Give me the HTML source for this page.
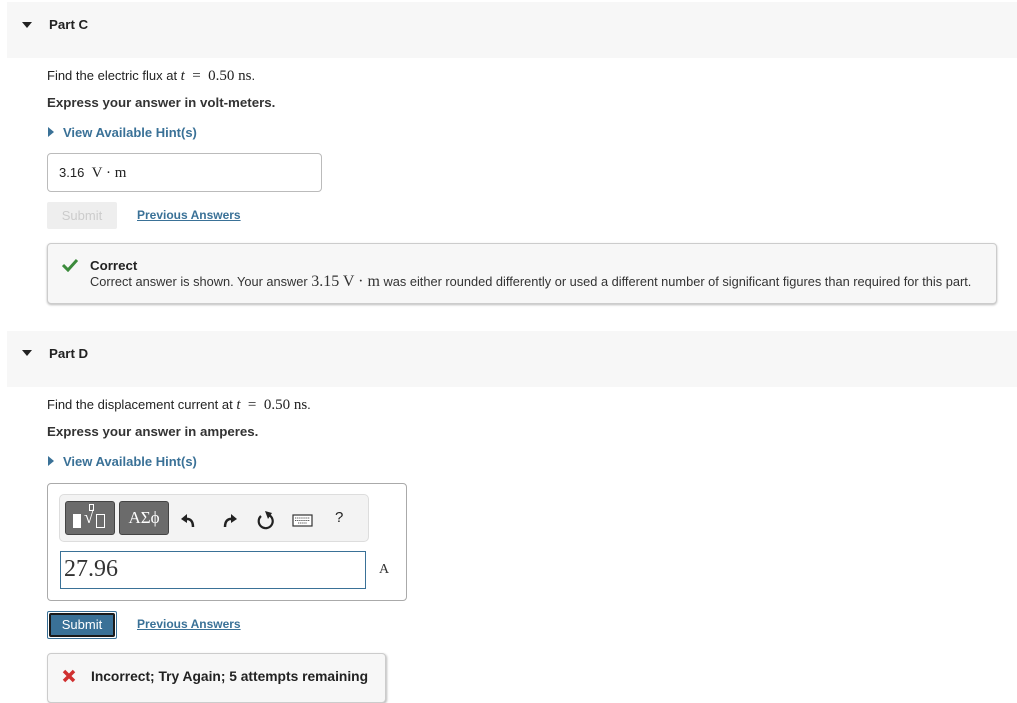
<!DOCTYPE html>
<html><head><style>
*{box-sizing:border-box;margin:0;padding:0}
body{width:1017px;height:698px;overflow:hidden;background:#fff;font-family:"Liberation Sans",Arial,sans-serif;color:#333;position:relative}
.a{position:absolute}
.band{position:absolute;left:7px;width:1010px;height:56px;background:#f7f7f7}
.tri{position:absolute;left:22px;width:0;height:0;border-left:5px solid transparent;border-right:5px solid transparent;border-top:6px solid #222}
.t{font-size:13px;color:#222}
.b{font-size:13.3px;font-weight:bold;color:#333}
.m{font-family:"Liberation Serif",serif;font-size:15px}
.hint{font-size:13px;font-weight:bold;color:#3a7197}
.ht{position:absolute;left:48px;width:0;height:0;border-top:5px solid transparent;border-bottom:5px solid transparent;border-left:6px solid #3a7197}
.link{font-size:12px;font-weight:bold;color:#3a7197;text-decoration:underline}
.btn{position:absolute;background:#6b6b6b;border:1px solid #444;border-radius:3px;color:#fff}
</style></head><body>
<div class="band" style="top:2px"></div>
<div class="tri" style="top:22px"></div>
<div class="a b" style="left:49px;top:17px;color:#222">Part C</div>
<div class="a t" style="left:47px;top:68px">Find the electric flux at <span class="m" style="font-style:italic">t</span> <span class="m">&nbsp;=&nbsp; 0.50 ns</span>.</div>
<div class="a b" style="left:47px;top:95px">Express your answer in volt-meters.</div>
<div class="ht" style="top:127px"></div>
<div class="a hint" style="left:63px;top:125px">View Available Hint(s)</div>
<div class="a" style="left:47px;top:153px;width:275px;height:39px;border:1px solid #bbb;border-radius:4px"></div>
<div class="a t" style="left:59px;top:165px">3.16 <span class="m">&nbsp;V · m</span></div>
<div class="a" style="left:47px;top:202px;width:70px;height:27px;background:#eee;border-radius:2px;color:#ccc;font-size:13px;text-align:center;line-height:27px">Submit</div>
<div class="a link" style="left:137px;top:208px">Previous Answers</div>
<div class="a" style="left:47px;top:243px;width:950px;height:61px;background:#f7f7f7;border:1px solid #ccc;border-radius:4px;box-shadow:0 1px 2px #bbb"></div>
<svg class="a" style="left:62px;top:258px" width="16" height="14"><path d="M1 7 L6 12 L15 2" stroke="#3c8b3c" stroke-width="3" fill="none"/></svg>
<div class="a b" style="left:90px;top:258px;color:#222">Correct</div>
<div class="a" style="left:90px;top:273px;font-size:12.8px;color:#333;white-space:nowrap">Correct answer is shown. Your answer <span class="m" style="font-size:16px">3.15 V · m</span> was either rounded differently or used a different number of significant figures than required for this part.</div>
<div class="band" style="top:331px"></div>
<div class="tri" style="top:350px"></div>
<div class="a b" style="left:49px;top:346px;color:#222">Part D</div>
<div class="a t" style="left:47px;top:397px">Find the displacement current at <span class="m" style="font-style:italic">t</span> <span class="m">&nbsp;=&nbsp; 0.50 ns</span>.</div>
<div class="a b" style="left:47px;top:424px">Express your answer in amperes.</div>
<div class="ht" style="top:456px"></div>
<div class="a hint" style="left:63px;top:454px">View Available Hint(s)</div>
<div class="a" style="left:47px;top:483px;width:360px;height:118px;border:1px solid #aaa;border-radius:4px"></div>
<div class="a" style="left:59px;top:494px;width:310px;height:48px;background:#f3f3f3;border:1px solid #ddd;border-radius:5px"></div>
<div class="btn" style="left:65px;top:501px;width:50px;height:34px">
<div class="a" style="left:7px;top:12px;width:8px;height:14px;background:#fff"></div>
<div class="a" style="left:18px;top:5px;font-family:'Liberation Serif',serif;font-size:18px">√</div>
<div class="a" style="left:23px;top:2px;width:5px;height:7px;border:1px solid #fff"></div>
<div class="a" style="left:30px;top:12px;width:9px;height:14px;border:1px solid #fff"></div>
</div>
<div class="btn" style="left:119px;top:501px;width:50px;height:34px;font-family:'Liberation Serif',serif;font-size:17px;text-align:center;line-height:32px">ΑΣϕ</div>
<svg class="a" style="left:180px;top:508px" width="150" height="24" viewBox="0 0 150 24">
<path d="M7 6 L1 11 L7 15 Z" fill="#222"/><path d="M5 11 Q13 10 13 19" stroke="#222" stroke-width="2.5" fill="none"/>
<path d="M51 6 L57 11 L51 15 Z" fill="#222"/><path d="M53 11 Q45 10 45 19" stroke="#222" stroke-width="2.5" fill="none"/>
<path d="M81 8 A7 7 0 1 0 89 7" stroke="#222" stroke-width="2.2" fill="none"/>
<path d="M85 3 L92 5 L88 11 Z" fill="#222"/>
<rect x="113" y="7" width="19" height="11" fill="#fff" stroke="#333" stroke-width="1.2"/>
<path d="M115 10h15M115 12.5h15M118 15h9" stroke="#555" stroke-width="1" stroke-dasharray="1.3 0.8"/>
</svg>
<div class="a" style="left:335px;top:509px;font-size:15px;color:#222">?</div>
<div class="a" style="left:60px;top:551px;width:306px;height:38px;border:1px solid #3a7197"></div>
<div class="a" style="left:64px;top:556px;font-family:'Liberation Serif',serif;font-size:24px;color:#333">27.96</div>
<div class="a" style="left:379px;top:562px;font-family:'Liberation Serif',serif;font-size:14px">A</div>
<div class="a" style="left:47px;top:611px;width:70px;height:28px;border:1px solid #3a7197;border-radius:2px;padding:1px"><div style="width:100%;height:100%;background:#3a7197;border:2px solid #1a1a1a;border-radius:2px;color:#fff;font-size:13px;text-align:center;line-height:20px">Submit</div></div>
<div class="a link" style="left:137px;top:617px">Previous Answers</div>
<div class="a" style="left:47px;top:653px;width:339px;height:50px;background:#f7f7f7;border:1px solid #ccc;border-radius:4px;box-shadow:1px 1px 2px #bbb"></div>
<svg class="a" style="left:62px;top:669px" width="14" height="14"><path d="M2 2 L12 12 M12 2 L2 12" stroke="#d03030" stroke-width="3.5"/></svg>
<div class="a b" style="left:91px;top:669px;color:#222;font-size:13.8px">Incorrect; Try Again; 5 attempts remaining</div>
</body></html>
